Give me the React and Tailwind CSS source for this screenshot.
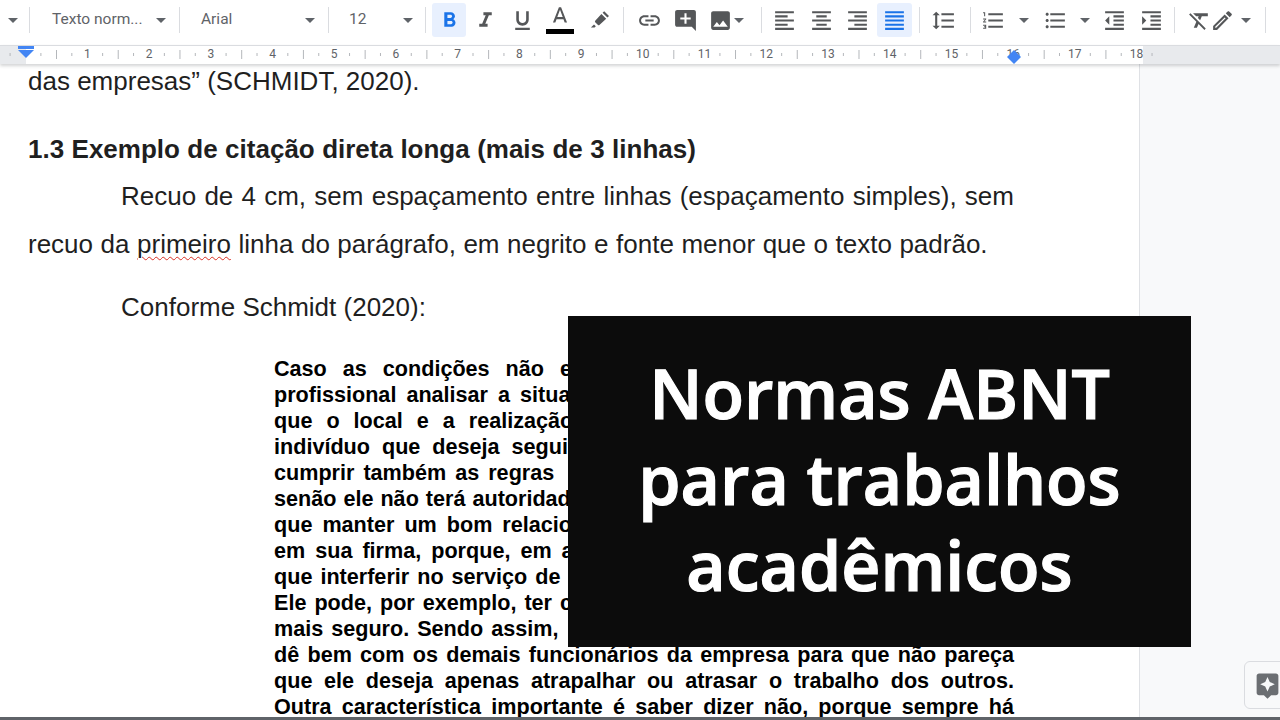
import React from 'react';
import {
  MdArrowDropDown, MdFormatBold, MdFormatItalic, MdFormatUnderlined, MdLink, MdAddComment, MdImage,
  MdFormatAlignLeft, MdFormatAlignCenter, MdFormatAlignRight, MdFormatAlignJustify, MdFormatLineSpacing,
  MdFormatListNumbered, MdFormatListBulleted, MdFormatIndentDecrease, MdFormatIndentIncrease,
  MdFormatClear, MdOutlineEdit, MdAssistant,
} from 'react-icons/md';

// the part behind the title box is only guessed, word spacing copies the justified gaps
const quoteLines = [
  ['Caso as condições não estiverem adequadas', '[word-spacing:10px]'],
  ['profissional analisar a situação e decidir', '[word-spacing:4px]'],
  ['que o local e a realização do trabalho', '[word-spacing:8px]'],
  ['indivíduo que deseja seguir nesta', '[word-spacing:6px]'],
  ['cumprir também as regras\u00a0\u00a0\u00a0impostas', '[word-spacing:3px]'],
  ['senão ele não terá autoridade para', '[word-spacing:1px]'],
  ['que manter um bom relacionamento', '[word-spacing:4px]'],
  ['em sua firma, porque, em algum momento', '[word-spacing:4px]'],
  ['que interferir no serviço de outra', '[word-spacing:2px]'],
  ['Ele pode, por exemplo, ter conhecimento', '[word-spacing:2px]'],
  ['mais seguro. Sendo assim,\u00a0\u00a0é importante', '[word-spacing:2px]'],
];

const fullLines = [
  'dê bem com os demais funcionários da empresa para que não pareça',
  'que ele deseja apenas atrapalhar ou atrasar o trabalho dos outros.',
  'Outra característica importante é saber dizer não, porque sempre há',
];

const rulerNumbers = [1, 2, 3, 4, 5, 6, 7, 8, 9, 10, 11, 12, 13, 14, 15, 16, 17, 18];

const Sep = ({ className }) => <div className={`w-px h-[26px] bg-[#dadce0] shrink-0 ${className}`} />;

const Caret = ({ className = '' }) => (
  <MdArrowDropDown className={`text-[24px] text-[#5f6368] shrink-0 ${className}`} />
);

const Tool = ({ icon: Icon, className = '', active }) => (
  <div className={`h-[34px] flex items-center justify-center shrink-0 rounded-[3px] ${active ? 'bg-[#e8f0fe] text-[#1a73e8]' : 'text-[#555759]'} ${className}`}>
    <Icon className="text-[25px]" />
  </div>
);

const TextColorIcon = () => (
  <svg viewBox="0 0 24 24" className="w-[26px] h-[26px] -mt-[7px]" fill="currentColor">
    <path d="M11 3 5.5 17h2.2l1.1-3h6.4l1.1 3h2.2L13 3h-2zm-1.5 9L12 5.3 14.5 12h-5z" />
  </svg>
);

const HighlightIcon = () => (
  <svg viewBox="0 0 24 24" className="w-[24px] h-[24px]" fill="currentColor">
    <path d="M16.2 3.2 21 8l-1.6 1.6-4.8-4.8zM13.4 6l4.8 4.8-6.8 6.2c-.5.4-1 .4-1.4 0l-2.8-2.8c-.4-.4-.4-1 0-1.4zM6 16.4l1.8 1.8-1.2 1.3H2.9z" />
  </svg>
);

function Toolbar() {
  return (
    <div className="h-[45px] pb-[5px] flex items-center bg-white font-['Roboto',sans-serif] text-[15.5px] text-[#5f6368]">
      <Caret className="ml-[1px]" />
      <Sep className="ml-[4px]" />
      <span className="ml-[22px] w-[97px] whitespace-nowrap">Texto norm...</span>
      <Caret />
      <Sep className="ml-[6px]" />
      <span className="ml-[21px] w-[97px]">Arial</span>
      <Caret />
      <Sep className="ml-[6px]" />
      <span className="ml-[20px] w-[47px]">12</span>
      <Caret />
      <Sep className="ml-[5px]" />
      <Tool icon={MdFormatBold} active className="ml-[6px] w-[34px]" />
      <Tool icon={MdFormatItalic} className="ml-[2px] w-[34px]" />
      <Tool icon={MdFormatUnderlined} className="ml-[3px] w-[34px]" />
      <div className="relative ml-[4px] w-[34px] h-[34px] flex items-center justify-center text-[#555759] shrink-0">
        <TextColorIcon />
        <div className="absolute left-[3px] top-[26px] w-[28px] h-[5px] bg-black" />
      </div>
      <Tool icon={HighlightIcon} className="ml-[6px] w-[34px]" />
      <Sep className="ml-[6px]" />
      <Tool icon={MdLink} className="ml-[8px] w-[34px]" />
      <Tool icon={MdAddComment} className="ml-[2px] w-[34px]" />
      <Tool icon={MdImage} className="ml-[1px] w-[34px]" />
      <Caret className="-ml-[10px]" />
      <Sep className="ml-[10px]" />
      <Tool icon={MdFormatAlignLeft} className="ml-[5px] w-[34px]" />
      <Tool icon={MdFormatAlignCenter} className="ml-[3px] w-[34px]" />
      <Tool icon={MdFormatAlignRight} className="ml-[2px] w-[34px]" />
      <Tool icon={MdFormatAlignJustify} active className="ml-[3px] w-[35px]" />
      <Sep className="ml-[7px]" />
      <Tool icon={MdFormatLineSpacing} className="ml-[6px] w-[34px]" />
      <Sep className="ml-[10px]" />
      <Tool icon={MdFormatListNumbered} className="ml-[5px] w-[34px]" />
      <Caret className="ml-[2px]" />
      <Tool icon={MdFormatListBulleted} className="ml-[2px] w-[34px]" />
      <Caret className="ml-[1px]" />
      <Tool icon={MdFormatIndentDecrease} className="ml-0 w-[34px]" />
      <Tool icon={MdFormatIndentIncrease} className="ml-[3px] w-[34px]" />
      <Sep className="ml-[6px]" />
      <Tool icon={MdFormatClear} className="ml-[7px] w-[34px]" />
      <Tool icon={MdOutlineEdit} className="-ml-[11px] w-[34px]" />
      <Caret className="-ml-[5px]" />
      <Sep className="ml-[7px]" />
    </div>
  );
}

function Ruler() {
  const ticks = [];
  for (let i = 0; i < 19; i++) {
    const c = 25.5 + i * 61.73;
    ticks.push(<path key={`a${i}`} d={`M${c - 15.4} 16v3M${c + 15.4} 16v3`} />);
    if (i < 18) ticks.push(<path key={`b${i}`} d={`M${c + 31} 13v9`} />);
  }
  return (
    <div className="relative z-10 h-[19px] border-t border-[#dadce0] bg-white shadow-[0_2px_3px_rgba(60,64,67,0.22)]">
      <div className="absolute left-0 top-0 bottom-0 w-[26px] bg-[#e8eaed]" />
      <div className="absolute left-[1143px] right-0 top-0 bottom-0 bg-[#e8eaed]" />
      <svg className="absolute left-0 -top-[9px] w-[1280px] h-[32px]" viewBox="0 0 1280 32" stroke="#b4b7bb" fill="none">
        {ticks}
        <path d="M18 9h16v3H18z" fill="#4285f4" stroke="none" />
        <path d="M18 13h16l-8 8z" fill="#4285f4" stroke="none" />
      </svg>
      <div className="relative flex pl-[56.5px] font-['Roboto',sans-serif] text-[12px] leading-[17px] text-[#5f6368]">
        {rulerNumbers.map((n) => (
          <span key={n} className="w-[61.73px] text-center shrink-0">{n}</span>
        ))}
      </div>
      <svg className="absolute left-[1007px] top-[4px] w-[14px] h-[14px]" viewBox="0 0 14 14">
        <path d="M7 0l7 7-7 7-7-7z" fill="#4285f4" />
      </svg>
    </div>
  );
}

function Page() {
  return (
    <div className="w-[1140px] shrink-0 h-full overflow-hidden bg-white border-r border-[#dfe1e5] pt-px font-['Liberation_Sans',Arial,sans-serif] text-[#1f1f1f] text-[26px] whitespace-nowrap">
      <p className="h-[32px] leading-[32px] pl-[28px]">das empresas” (SCHMIDT, 2020).</p>
      <p className="mt-[36px] h-[32px] leading-[32px] pl-[28px] font-bold [word-spacing:0.2px]">1.3 Exemplo de citação direta longa (mais de 3 linhas)</p>
      <p className="mt-[15px] h-[32px] leading-[32px] ml-[121px] w-[893px] whitespace-normal [text-align:justify] [text-align-last:justify]">
        Recuo de 4 cm, sem espaçamento entre linhas (espaçamento simples), sem
      </p>
      <p className="mt-[16px] h-[32px] leading-[32px] pl-[28px] [word-spacing:0.3px]">
        recuo da <span className="underline decoration-wavy decoration-[#d93025] decoration-1 underline-offset-[3px]">primeiro</span> linha do parágrafo, em negrito e fonte menor que o texto padrão.
      </p>
      <p className="mt-[31px] h-[32px] leading-[32px] pl-[121px]">Conforme Schmidt (2020):</p>
      <div className="mt-[33px] ml-[274px] w-[740px] text-[21.6px] font-bold text-black">
        {quoteLines.map(([line, spacing]) => (
          <div key={line} className={`h-[26px] leading-[26px] ${spacing}`}>{line}</div>
        ))}
        {fullLines.map((line) => (
          <div key={line} className="h-[26px] leading-[26px] whitespace-normal [text-align:justify] [text-align-last:justify]">{line}</div>
        ))}
      </div>
    </div>
  );
}

export default function App() {
  return (
    <div className="relative w-[1280px] h-[720px] overflow-hidden bg-[#f8f9fa] flex flex-col">
      <Toolbar />
      <Ruler />
      <div className="flex-1 min-h-0 flex border-b-[3px] border-[#5f6368]">
        <Page />
      </div>
      <div className="absolute left-[1244px] top-[661px] w-[44px] h-[48px] bg-[#f8f9fa] border border-[#dadce0] rounded-l-[6px] flex items-center pl-[8px]">
        <MdAssistant className="text-[29px] text-[#6b6e72]" />
      </div>
      <div className="absolute left-[568px] top-[316px] w-[623px] h-[331px] pb-[6px] bg-[#0c0c0c] flex flex-col items-center justify-center font-['Open_Sans',sans-serif] font-semibold text-white text-[68px] leading-[86px] [-webkit-text-stroke:1.2px_#fff]">
        <div>Normas ABNT</div>
        <div>para trabalhos</div>
        <div>acadêmicos</div>
      </div>
    </div>
  );
}
